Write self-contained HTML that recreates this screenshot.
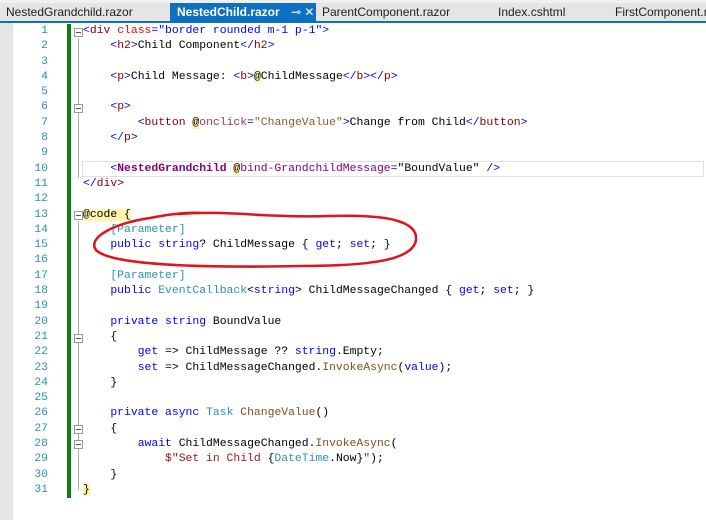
<!DOCTYPE html>
<html><head><meta charset="utf-8"><style>
body{margin:0;width:706px;height:520px;background:#fff;position:relative;overflow:hidden;font-family:"Liberation Sans",sans-serif}
.tabbar{position:absolute;left:0;top:0;width:706px;height:22px;background:#e5e5e5;border-top:3px solid #f0f0f0;box-sizing:border-box}
.blue{position:absolute;left:0;top:21px;width:706px;height:2px;background:#0e70c0}
.tab{position:absolute;top:3px;height:19px;line-height:19px;font-size:12px;color:#1e1e1e}
.act{background:#0e70c0;color:#fff;font-weight:bold;padding-left:7px}
.strip{position:absolute;left:0;top:23px;width:13px;height:497px;background:#e6e6e6}
.green{position:absolute;left:67px;top:24px;width:4px;height:474px;background:#107c10}
.ln{position:absolute;left:14px;width:34px;text-align:right;color:#2b91af;font:11.4px/15.3px "Liberation Mono",monospace}
.code{position:absolute;left:83px;font:11.4px/15.3px "Liberation Mono",monospace;white-space:pre;color:#000}
.t{color:#0000ff}.n{color:#800000}.a{color:#ff0000}.r{background:#fff5b0}.k{color:#0000ff}.ty{color:#2b91af}.m{color:#74531f}.s{color:#a31515}.c{color:#800080;font-weight:bold}.p{color:#800080}.at{color:#8b3a62}.sv{color:#8b5a2b}
.box{position:absolute;left:74px;width:7px;height:7px;border:1px solid #999;background:#fff;box-sizing:content-box}
.box:after{content:"";position:absolute;left:1px;top:3px;width:5px;height:1px;background:#555}
.vl{position:absolute;left:78px;width:1px;background:#aaa}
</style></head><body>
<div class="tabbar"></div>
<div class="tab" style="left:6px">NestedGrandchild.razor</div>
<div class="tab act" style="left:170px;width:139px">NestedChild.razor <span style="font-weight:normal;margin-left:8px">⊸ ✕</span></div>
<div class="tab" style="left:322px">ParentComponent.razor</div>
<div class="tab" style="left:498px">Index.cshtml</div>
<div class="tab" style="left:615px">FirstComponent.razor</div>
<div class="blue"></div>
<div class="strip"></div>
<div class="green"></div>
<div class="ln" style="top:24px">1<br>2<br>3<br>4<br>5<br>6<br>7<br>8<br>9<br>10<br>11<br>12<br>13<br>14<br>15<br>16<br>17<br>18<br>19<br>20<br>21<br>22<br>23<br>24<br>25<br>26<br>27<br>28<br>29<br>30<br>31</div>
<div class="vl" style="top:38px;height:140px"></div>
<div class="vl" style="top:221px;height:269px"></div>
<div class="box" style="top:28px"></div>
<div class="box" style="top:104px"></div>
<div class="box" style="top:211px"></div>
<div class="box" style="top:334px"></div>
<div class="box" style="top:425px"></div>
<div class="box" style="top:440px"></div>
<div style="position:absolute;left:82px;top:161px;width:620px;height:14px;border:1px solid #e0e0e0"></div>
<div class="code" style="top:24px"><span class="t">&lt;</span><span class="n">div</span> <span class="a">class</span><span class="t">="border rounded m-1 p-1"&gt;</span>
    <span class="t">&lt;</span><span class="n">h2</span><span class="t">&gt;</span>Child Component<span class="t">&lt;/</span><span class="n">h2</span><span class="t">&gt;</span>

    <span class="t">&lt;</span><span class="n">p</span><span class="t">&gt;</span>Child Message: <span class="t">&lt;</span><span class="n">b</span><span class="t">&gt;</span><span class="r">@</span>ChildMessage<span class="t">&lt;/</span><span class="n">b</span><span class="t">&gt;&lt;/</span><span class="n">p</span><span class="t">&gt;</span>

    <span class="t">&lt;</span><span class="n">p</span><span class="t">&gt;</span>
        <span class="t">&lt;</span><span class="n">button</span> <span class="r">@</span><span class="at">onclick</span><span class="t">=</span><span class="sv">"ChangeValue"</span><span class="t">&gt;</span>Change from Child<span class="t">&lt;/</span><span class="n">button</span><span class="t">&gt;</span>
    <span class="t">&lt;/</span><span class="n">p</span><span class="t">&gt;</span>

    <span class="t">&lt;</span><span class="c">NestedGrandchild</span> <span class="r">@</span><span class="p">bind-GrandchildMessage</span><span class="t">=</span>"BoundValue" <span class="t">/&gt;</span>
<span class="t">&lt;/</span><span class="n">div</span><span class="t">&gt;</span>

<span class="r">@code {</span>
    <span class="ty">[Parameter]</span>
    <span class="k">public</span> <span class="k">string</span>? ChildMessage { <span class="k">get</span>; <span class="k">set</span>; }

    <span class="ty">[Parameter]</span>
    <span class="k">public</span> <span class="ty">EventCallback</span>&lt;<span class="k">string</span>&gt; ChildMessageChanged { <span class="k">get</span>; <span class="k">set</span>; }

    <span class="k">private</span> <span class="k">string</span> BoundValue
    {
        <span class="k">get</span> =&gt; ChildMessage ?? <span class="k">string</span>.Empty;
        <span class="k">set</span> =&gt; ChildMessageChanged.<span class="m">InvokeAsync</span>(<span class="k">value</span>);
    }

    <span class="k">private</span> <span class="k">async</span> <span class="ty">Task</span> <span class="m">ChangeValue</span>()
    {
        <span class="k">await</span> ChildMessageChanged.<span class="m">InvokeAsync</span>(
            <span class="s">$"Set in Child </span>{<span class="ty">DateTime</span>.Now}<span class="s">"</span>);
    }
<span class="r">}</span></div>
<svg style="position:absolute;left:0;top:0" width="706" height="520"><path d="M178 214 C230 210 260 218 330 216 C390 214 418 222 416 240 C413 258 380 266 300 266 C200 268 110 265 96 250 C86 236 120 222 150 218 C170 214 190 212 200 213" fill="none" stroke="#e0141c" stroke-width="2.5" stroke-linecap="round"/></svg>
</body></html>
